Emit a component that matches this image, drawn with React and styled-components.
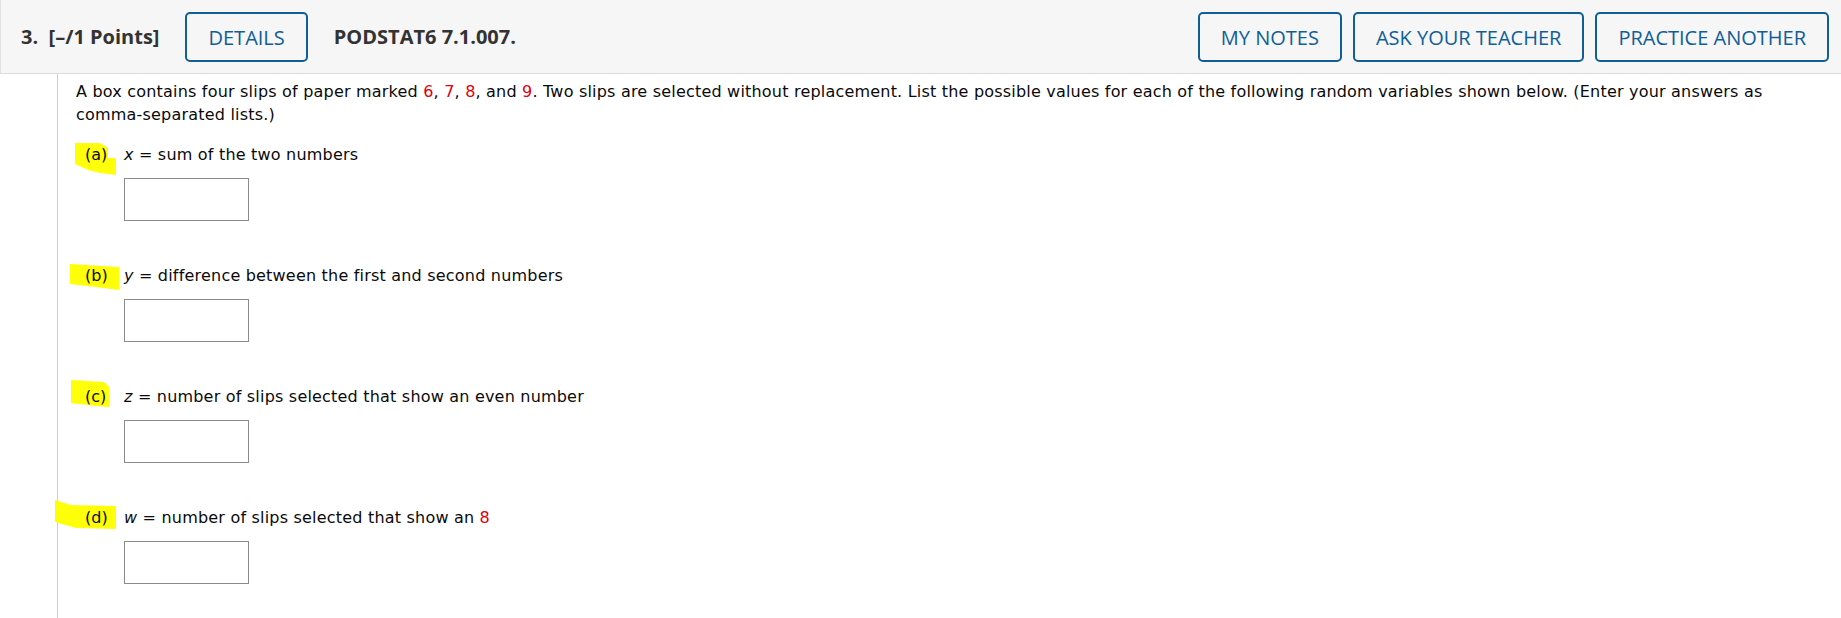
import styled, { createGlobalStyle } from "styled-components";

const GlobalStyle = createGlobalStyle`
  html, body {
    margin: 0;
    padding: 0;
    background: #ffffff;
  }
  #root {
    min-height: 100vh;
  }
`;

const parts = [
  {
    id: "a",
    name: "x",
    text: "sum of the two numbers",
    mark: "polygon(0px 0px, 25px 0px, 33px 5px, 33px 15px, 41px 15px, 41px 32px, 25px 30px, 13px 27px, 0px 21px)",
    markLeft: -1,
    markTop: 0,
    markW: 42,
    markH: 32,
  },
  {
    id: "b",
    name: "y",
    text: "difference between the first and second numbers",
    mark: "polygon(0px 0px, 49px 3px, 49px 26px, 26px 23px, 0px 20px)",
    markLeft: -6,
    markTop: 0,
    markW: 49,
    markH: 26,
  },
  {
    id: "c",
    name: "z",
    text: "number of slips selected that show an even number",
    mark: "polygon(0px 0px, 33px 2px, 38px 7px, 38px 27px, 25px 26px, 0px 23px)",
    markLeft: -5,
    markTop: -5,
    markW: 38,
    markH: 27,
  },
  {
    id: "d",
    name: "w",
    text: "number of slips selected that show an ",
    red: "8",
    mark: "polygon(0px 0px, 16px 5px, 61px 6px, 61px 29px, 21px 28px, 0px 22px)",
    markLeft: -21,
    markTop: -6,
    markW: 61,
    markH: 29,
  },
];

export default function App() {
  return (
    <Page>
      <GlobalStyle />
      <Header>
        <Points>3.&nbsp; [–/1 Points]</Points>
        <OutlineButton>DETAILS</OutlineButton>
        <Code>PODSTAT6 7.1.007.</Code>
        <Actions>
          <OutlineButton>MY NOTES</OutlineButton>
          <OutlineButton>ASK YOUR TEACHER</OutlineButton>
          <OutlineButton>PRACTICE ANOTHER</OutlineButton>
        </Actions>
      </Header>
      <Body>
        <Question>
          A box contains four slips of paper marked <Red>6</Red>, <Red>7</Red>,{" "}
          <Red>8</Red>, and <Red>9</Red>. Two slips are selected without
          replacement. List the possible values for each of the following random
          variables shown below. (Enter your answers as{" "}
          <NoBreak>comma-separated</NoBreak> lists.)
        </Question>
        <Parts>
          {parts.map((p) => (
            <Part key={p.id}>
              <PartRow>
                <LabelCell>
                  <Mark
                    $clip={p.mark}
                    $left={p.markLeft}
                    $top={p.markTop}
                    $w={p.markW}
                    $h={p.markH}
                  />
                  <LabelText>({p.id})</LabelText>
                </LabelCell>
                <Statement>
                  <Var>{p.name}</Var> = {p.text}
                  {p.red && <Red>{p.red}</Red>}
                </Statement>
              </PartRow>
              <AnswerBox type="text" />
            </Part>
          ))}
        </Parts>
      </Body>
    </Page>
  );
}

const Page = styled.div`
  display: flex;
  flex-direction: column;
  min-height: 100vh;
`;

const Header = styled.div`
  display: flex;
  flex-direction: row;
  align-items: center;
  gap: 26px;
  height: 73px;
  padding: 0 12px 0 20px;
  background: #f6f6f6;
  border-left: 1px solid #e2e2e2;
  border-bottom: 1px solid #dcdcdc;
  font-family: "Open Sans", sans-serif;
  font-size: 20px;
`;

const Points = styled.span`
  color: #333333;
  font-weight: 700;
  white-space: pre;
`;

const Code = styled.span`
  color: #333333;
  font-weight: 700;
`;

const Actions = styled.div`
  display: flex;
  flex-direction: row;
  gap: 11px;
  margin-left: auto;
`;

const OutlineButton = styled.button`
  box-sizing: border-box;
  height: 50px;
  padding: 0 21px;
  margin-top: 1px;
  background: transparent;
  border: 2px solid #0f5e98;
  border-radius: 5px;
  color: #0f5e98;
  font-family: "Open Sans", sans-serif;
  font-size: 20px;
  font-weight: 500;
  cursor: pointer;
`;

const Body = styled.div`
  flex: 1;
  margin-left: 57px;
  border-left: 1px solid #cccccc;
  padding: 6px 40px 0 18px;
  font-family: Verdana, "DejaVu Sans", sans-serif;
  font-size: 16px;
  line-height: 23px;
  letter-spacing: 0.2px;
  color: #0a0a0a;
`;

const Question = styled.p`
  margin: 0;
`;

const NoBreak = styled.span`
  white-space: nowrap;
`;

const Red = styled.span`
  color: #e0000e;
`;

const Parts = styled.div`
  display: flex;
  flex-direction: column;
  margin-top: 17px;
`;

const Part = styled.div`
  display: flex;
  flex-direction: column;
  height: 121px;
`;

const PartRow = styled.div`
  display: flex;
  flex-direction: row;
  align-items: center;
`;

const LabelCell = styled.span`
  position: relative;
  width: 48px;
  padding-left: 9px;
  box-sizing: border-box;
  letter-spacing: 0;
`;

const Mark = styled.span`
  position: absolute;
  left: ${(p) => p.$left}px;
  top: ${(p) => p.$top}px;
  width: ${(p) => p.$w}px;
  height: ${(p) => p.$h}px;
  background: #ffff0a;
  clip-path: ${(p) => p.$clip};
`;

const LabelText = styled.span`
  position: relative;
`;

const Statement = styled.span``;

const Var = styled.i`
  font-style: italic;
`;

const AnswerBox = styled.input`
  box-sizing: border-box;
  width: 125px;
  height: 43px;
  margin: 11.5px 0 0 48px;
  border: 1px solid #8a8a8a;
  border-radius: 0;
  background: #ffffff;
  outline: none;
`;
